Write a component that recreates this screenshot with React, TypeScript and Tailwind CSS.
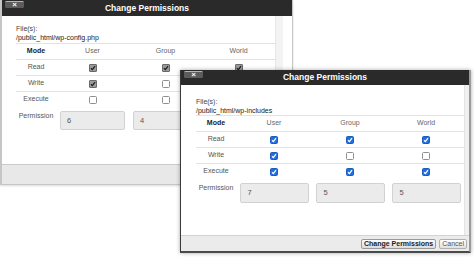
import React from "react";

type Variant = "back" | "front";

function Check({ on, variant }: { on: boolean; variant: Variant }) {
  if (!on) {
    return <span className="block w-[8px] h-[8px] rounded-[1.5px] border border-[#8f8f8f] bg-white" />;
  }
  if (variant === "front") {
    return (
      <span className="flex items-center justify-center w-[8px] h-[8px] rounded-[1.5px] bg-[#1f6fe0] border border-[#1a5cc0]">
        <svg width="6" height="6" viewBox="0 0 6 6">
          <path d="M1 3.2 L2.4 4.6 L5 1.2" stroke="white" strokeWidth="1.3" fill="none" />
        </svg>
      </span>
    );
  }
  return (
    <span className="flex items-center justify-center w-[8px] h-[8px] rounded-[1px] bg-[#9a9a9a] border border-[#6a6a6a]">
      <svg width="6" height="6" viewBox="0 0 6 6">
        <path d="M1 3.2 L2.4 4.6 L5 1.2" stroke="#1e1e1e" strokeWidth="1.3" fill="none" />
      </svg>
    </span>
  );
}

function CloseBtn() {
  return (
    <div className="w-[19px] h-[7px] rounded-[1.5px] bg-[#5c5c5c] border-t border-[#b5b5b5] flex items-center justify-center text-white font-bold text-[8px] leading-none">
      ×
    </div>
  );
}

function TitleBar({ front }: { front: boolean }) {
  return (
    <div
      className={
        front
          ? "relative h-[15px] shrink-0 flex items-center justify-center bg-[#2a2a2a] text-white font-bold text-[8.5px] leading-none"
          : "relative h-[16px] shrink-0 flex items-center justify-center bg-[#2a2a2a] text-white font-bold text-[8.5px] leading-none"
      }
    >
      <div className="absolute left-[3px] top-[1px]">
        <CloseBtn />
      </div>
      <span>Change Permissions</span>
    </div>
  );
}

type Rows = { label: string; cells: boolean[] }[];

function PermTable({
  variant,
  file,
  rows,
  values,
}: {
  variant: Variant;
  file: string;
  rows: Rows;
  values: string[];
}) {
  const front = variant === "front";
  const grid = front ? "grid grid-cols-[40px_76px_76px_76px]" : "grid grid-cols-[40px_73px_73px_73px]";
  return (
    <div className={front ? "w-[268px] pt-[12px]" : "w-[259px] pt-[8px]"}>
      <div className={front ? "border-b border-[#e3e3e3]" : "border-b border-[#e3e3e3] pb-[1px]"}>
        <div className="leading-[9px] text-[7px] text-[#444]">File(s):</div>
        <div className="leading-[9px] text-[7px] text-[#222]">{file}</div>
      </div>
      <div className={grid + " h-[16px] items-center border-b border-[#e3e3e3] text-[7px]"}>
        <div className="text-center font-bold text-[#222]">Mode</div>
        <div className="text-center text-[#666]">User</div>
        <div className="text-center text-[#666]">Group</div>
        <div className="text-center text-[#666]">World</div>
      </div>
      {rows.map((r, i) => (
        <div
          key={r.label}
          className={
            grid +
            (i < rows.length - 1
              ? " h-[16px] items-center border-b border-[#e3e3e3] text-[7px]"
              : " h-[15px] items-center text-[7px]")
          }
        >
          <div className="text-center text-[#555]">{r.label}</div>
          {r.cells.map((c, j) => (
            <div key={j} className="flex justify-center">
              <Check on={c} variant={variant} />
            </div>
          ))}
        </div>
      ))}
      <div className={grid + " mt-[4px] text-[7px]"}>
        <div className="text-center text-[#555] leading-[10px] whitespace-nowrap -mx-[3px]">Permission</div>
        {values.map((v, j) => (
          <div key={j} className="flex justify-center">
            <div
              className={
                front
                  ? "w-[69px] h-[20px] rounded-[2px] bg-[#ebebeb] border border-[#d2d2d2] flex items-center pl-[7px] text-[7.5px] text-[#555]"
                  : "w-[65px] h-[19px] rounded-[2px] bg-[#ebebeb] border border-[#d2d2d2] flex items-center pl-[6px] text-[7.5px] text-[#555]"
              }
            >
              {v}
            </div>
          </div>
        ))}
      </div>
    </div>
  );
}

export default function App() {
  return (
    <div className="relative w-[474px] h-[257px] bg-white overflow-hidden font-['Liberation_Sans',Arial,sans-serif]">
      {/* back dialog */}
      <div className="absolute left-0 top-0 w-[293px] h-[185px] flex flex-col bg-white border-l-2 border-r border-b border-[#c6c6c6] shadow-[0_1px_2px_rgba(0,0,0,0.15)]">
        <TitleBar front={false} />
        <div className="h-[148px] flex">
          <div className="pl-[14px]">
            <PermTable
              variant="back"
              file="/public_html/wp-config.php"
              rows={[
                { label: "Read", cells: [true, true, true] },
                { label: "Write", cells: [true, false, false] },
                { label: "Execute", cells: [false, false, false] },
              ]}
              values={["6", "4", "4"]}
            />
          </div>
          <div className="w-[8px] bg-[#f3f3f3] border-l border-[#e6e6e6]" />
        </div>
        <div className="h-[20px] bg-[#e8e8e8] border-t border-[#cbcbcb]" />
      </div>

      {/* front dialog */}
      <div className="absolute left-[180px] top-[70px] w-[291px] h-[183px] flex flex-col bg-white border-l border-[#3a3a3a] border-r-2 border-r-[#9a9a9a] border-b-2 border-b-[#4a4a4a] shadow-[0_0_4px_rgba(0,0,0,0.35)]">
        <TitleBar front={true} />
        <div className="h-[150px] flex">
          <div className="pl-[15px]">
            <PermTable
              variant="front"
              file="/public_html/wp-includes"
              rows={[
                { label: "Read", cells: [true, true, true] },
                { label: "Write", cells: [true, false, false] },
                { label: "Execute", cells: [true, true, true] },
              ]}
              values={["7", "5", "5"]}
            />
          </div>
          <div className="w-[5px] bg-[#f0f0f0] border-l border-[#e4e4e4]" />
        </div>
        <div className="h-[16px] bg-[#ebebeb] border-t border-[#d3d3d3] flex items-center justify-end pr-[2px] gap-[3px]">
          <button className="h-[10px] px-[2px] rounded-[2px] border border-[#9a9a9a] bg-gradient-to-b from-white to-[#dcdcdc] text-[7px] font-bold text-[#222] leading-none">
            Change Permissions
          </button>
          <button className="h-[10px] px-[2px] rounded-[2px] border border-[#b0b0b0] bg-gradient-to-b from-white to-[#e0e0e0] text-[7px] text-[#555] leading-none">
            Cancel
          </button>
        </div>
      </div>
    </div>
  );
}
